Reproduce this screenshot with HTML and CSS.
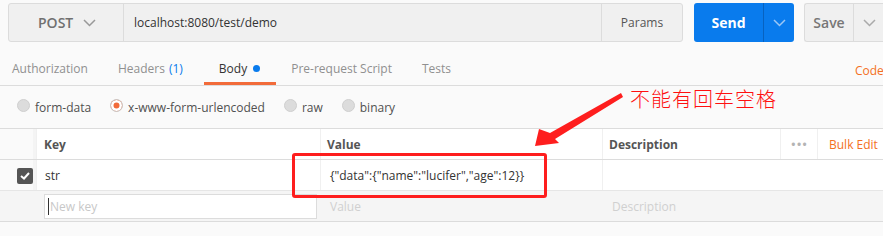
FILE: index.html
```html
<!DOCTYPE html>
<html lang="en">
  <head>
    <meta charset="UTF-8" />
    <meta name="viewport" content="width=device-width, initial-scale=1.0" />
    <title>Postman - Body</title>
    <link rel="stylesheet" href="styles.css">
  </head>
  <body>
    <div class="request-bar">
      <div class="url-group">
        <div class="method">
          POST
          <svg class="chevron" width="13" height="8" viewBox="0 0 13 8"><polyline points="1,1 6.5,6.5 12,1" /></svg>
        </div>
        <div class="url">localhost:8080/test/demo</div>
        <div class="params">Params</div>
      </div>
      <div class="send">
        <span class="send-label">Send</span>
        <span class="send-drop"><svg class="chevron" width="13" height="8" viewBox="0 0 13 8"><polyline points="1,1 6.5,6.5 12,1" /></svg></span>
      </div>
      <div class="save">
        <span class="save-label">Save</span>
        <span class="save-drop"><svg class="chevron" width="13" height="8" viewBox="0 0 13 8"><polyline points="1,1 6.5,6.5 12,1" /></svg></span>
      </div>
    </div>

    <div class="tabs">
      <div class="tab">Authorization</div>
      <div class="tab">Headers <span class="count">(1)</span></div>
      <div class="tab active">Body <span class="dot"></span></div>
      <div class="tab">Pre-request Script</div>
      <div class="tab">Tests</div>
      <div class="code">Code</div>
    </div>

    <div class="body-types">
      <label class="radio"><span class="circle"></span>form-data</label>
      <label class="radio"><span class="circle checked"></span>x-www-form-urlencoded</label>
      <label class="radio"><span class="circle"></span>raw</label>
      <label class="radio"><span class="circle"></span>binary</label>
    </div>

    <div class="kv-table">
      <div class="row head">
        <div class="cell check"></div>
        <div class="cell key">Key</div>
        <div class="cell value">Value</div>
        <div class="cell desc">
          <span>Description</span>
          <span class="more">•••</span>
          <span class="bulk">Bulk Edit</span>
        </div>
      </div>
      <div class="row">
        <div class="cell check">
          <span class="checkbox">
            <svg width="10" height="8" viewBox="0 0 10 8"><polyline points="1,4 4,6.5 9,1" /></svg>
          </span>
        </div>
        <div class="cell key">str</div>
        <div class="cell value">{"data":{"name":"lucifer","age":12}}</div>
        <div class="cell desc"></div>
      </div>
      <div class="row new">
        <div class="cell check"></div>
        <div class="cell key"><div class="input"><span class="caret"></span>New key</div></div>
        <div class="cell value placeholder">Value</div>
        <div class="cell desc placeholder">Description</div>
      </div>
    </div>

    <!-- annotation -->
    <div class="note">不能有回车空格</div>
    <div class="note-box"></div>
    <svg class="note-arrow" width="883" height="236" viewBox="0 0 883 236">
      <polygon points="621,93 550,133 539,129 535,146 559,143 555,139 623,97" />
    </svg>
  </body>
</html>
```

FILE: styles.css
```css
body {
  margin: 0;
  background-color: #fafafa;
  font-family: "Open Sans", "Noto Sans", sans-serif;
  font-size: 12px;
  color: #505050;
  width: 883px;
  height: 236px;
  overflow: hidden;
  position: relative;
}
.chevron {
  fill: none;
  stroke: #999;
  stroke-width: 1.5;
}
/* request bar */
.request-bar {
  display: flex;
  padding: 3px 0 0 8px;
  height: 39px;
}
.request-bar > div {
  flex-shrink: 0;
}
.url-group {
  display: flex;
  width: 675px;
  background-color: #f0f0f0;
  border: 1px solid #dcdcdc;
  border-radius: 3px;
  box-sizing: border-box;
}
.method {
  width: 115px;
  display: flex;
  align-items: center;
  padding-left: 29px;
  box-sizing: border-box;
  border-right: 1px solid #dcdcdc;
  font-size: 14px;
  font-weight: 600;
  color: #707070;
}
.method .chevron {
  margin-left: 10px;
}
.url {
  flex: 1;
  display: flex;
  align-items: center;
  padding-left: 10px;
  color: #333;
}
.params {
  width: 80px;
  display: flex;
  align-items: center;
  justify-content: center;
  border-left: 1px solid #dcdcdc;
  color: #555;
}
.send {
  display: flex;
  margin-left: 11px;
  width: 100px;
  background-color: #097bed;
  border-radius: 3px;
}
.send-label {
  width: 69px;
  display: flex;
  align-items: center;
  justify-content: center;
  border-right: 1px solid #0762c0;
  color: #fff;
  font-size: 14px;
  font-weight: 700;
}
.send-drop,
.save-drop {
  flex: 1;
  display: flex;
  align-items: center;
  justify-content: center;
}
.send .chevron {
  stroke: #9cc7f5;
}
.save {
  display: flex;
  margin-left: 10px;
  width: 90px;
  background-color: #f0f0f0;
  border: 1px solid #dcdcdc;
  border-right: none;
  border-radius: 3px 0 0 3px;
  box-sizing: border-box;
}
.save-label {
  width: 48px;
  display: flex;
  align-items: center;
  justify-content: center;
  border-right: 1px solid #dcdcdc;
  color: #777;
  font-size: 14px;
  font-weight: 600;
}
.save-drop {
  flex: none;
  width: 30px;
}
.save .chevron {
  stroke: #aaa;
}
/* tabs */
.tabs {
  display: flex;
  height: 43px;
  border-bottom: 1px solid #dcdcdc;
}
.tab {
  padding: 12px 15px 0;
  display: flex;
  align-items: center;
  color: #909090;
  border-bottom: 3px solid transparent;
}
.tab:first-child {
  padding-left: 12px;
}
.tab.active {
  color: #333;
  border-bottom-color: #f26b3a;
  margin-left: 6px;
  padding-right: 16px;
}
.count {
  color: #097bed;
  margin-left: 4px;
}
.dot {
  width: 7px;
  height: 7px;
  border-radius: 50%;
  background-color: #097bed;
  margin-left: 6px;
}
.code {
  margin-left: auto;
  padding-top: 14px;
  display: flex;
  align-items: center;
  color: #f47023;
  width: 28px;
  overflow: hidden;
  white-space: nowrap;
}
/* body type radios */
.body-types {
  display: flex;
  align-items: center;
  height: 42px;
  padding-left: 17px;
  color: #505050;
}
.radio {
  display: flex;
  align-items: center;
  margin-right: 19px;
}
.circle {
  width: 11px;
  height: 11px;
  border-radius: 50%;
  background-color: #dcdcdc;
  border: 1px solid #cfcfcf;
  margin-right: 5px;
  margin-top: -4px;
}
.circle.checked {
  background-color: #f26b3a;
  box-shadow: inset 0 0 0 2.5px #fff;
  border-color: #c9c9c9;
}
/* key value table */
.kv-table {
  border-top: 1px solid #dcdcdc;
}
.row {
  display: grid;
  grid-template-columns: 36px 284px 282px 1fr;
  height: 30px;
  background-color: #fff;
  border-bottom: 1px solid #e6e6e6;
}
.row.head {
  border-bottom: 1px solid #dcdcdc;
}
.row.new {
  background-color: #f5f5f5;
  border-bottom: 1px solid #dcdcdc;
}
.cell {
  display: flex;
  align-items: center;
  padding-left: 9px;
  border-left: 1px solid #f0f0f0;
  color: #333;
}
.cell.check {
  border-left: none;
  background-color: #fafafa;
  border-right: 3px solid #f4f4f4;
  padding-left: 0;
  justify-content: flex-end;
}
.row.new .cell.check {
  background-color: #f5f5f5;
  border-right-color: #f5f5f5;
}
.row.new .cell {
  border-left-color: #f5f5f5;
}
.head .cell {
  font-weight: 700;
  color: #555;
  padding-left: 6px;
}
.row .key {
  padding-left: 8px;
}
.head .key {
  padding-left: 7px;
}
.checkbox {
  width: 16px;
  height: 16px;
  background-color: #555;
  border-radius: 2px;
  display: flex;
  align-items: center;
  justify-content: center;
  margin-top: 2px;
}
.checkbox svg {
  fill: none;
  stroke: #fff;
  stroke-width: 2;
}
.desc .more {
  margin-left: auto;
  width: 36px;
  text-align: center;
  color: #b4b4b4;
  font-size: 15px;
  font-weight: 400;
  letter-spacing: 0;
  border-left: 1px solid #f0f0f0;
  border-right: 1px solid #f0f0f0;
  line-height: 30px;
}
.desc .bulk {
  width: 65px;
  box-sizing: border-box;
  padding-left: 11px;
  color: #f47023;
  font-weight: 400;
  white-space: nowrap;
}
.input {
  width: 273px;
  height: 25px;
  margin-left: -1px;
  box-sizing: border-box;
  border: 1px solid #dcdcdc;
  background-color: #fff;
  display: flex;
  align-items: center;
  padding-left: 3px;
  color: #c8c8c8;
}
.caret {
  width: 1px;
  height: 17px;
  background-color: #333;
  margin-right: 1px;
}
.placeholder {
  color: #d0d0d0;
}
/* annotation */
.note {
  position: absolute;
  left: 630px;
  top: 84px;
  font-family: "Noto Sans CJK SC", sans-serif;
  font-size: 20px;
  font-weight: 300;
  color: #ff1010;
  letter-spacing: 1px;
}
.note-box {
  position: absolute;
  left: 292px;
  top: 153px;
  width: 255px;
  height: 45px;
  box-sizing: border-box;
  border: 3px solid #fe1e1e;
  border-radius: 3px;
}
.note-arrow {
  position: absolute;
  left: 0;
  top: 0;
}
.note-arrow polygon {
  fill: #fe1e1e;
}
```
